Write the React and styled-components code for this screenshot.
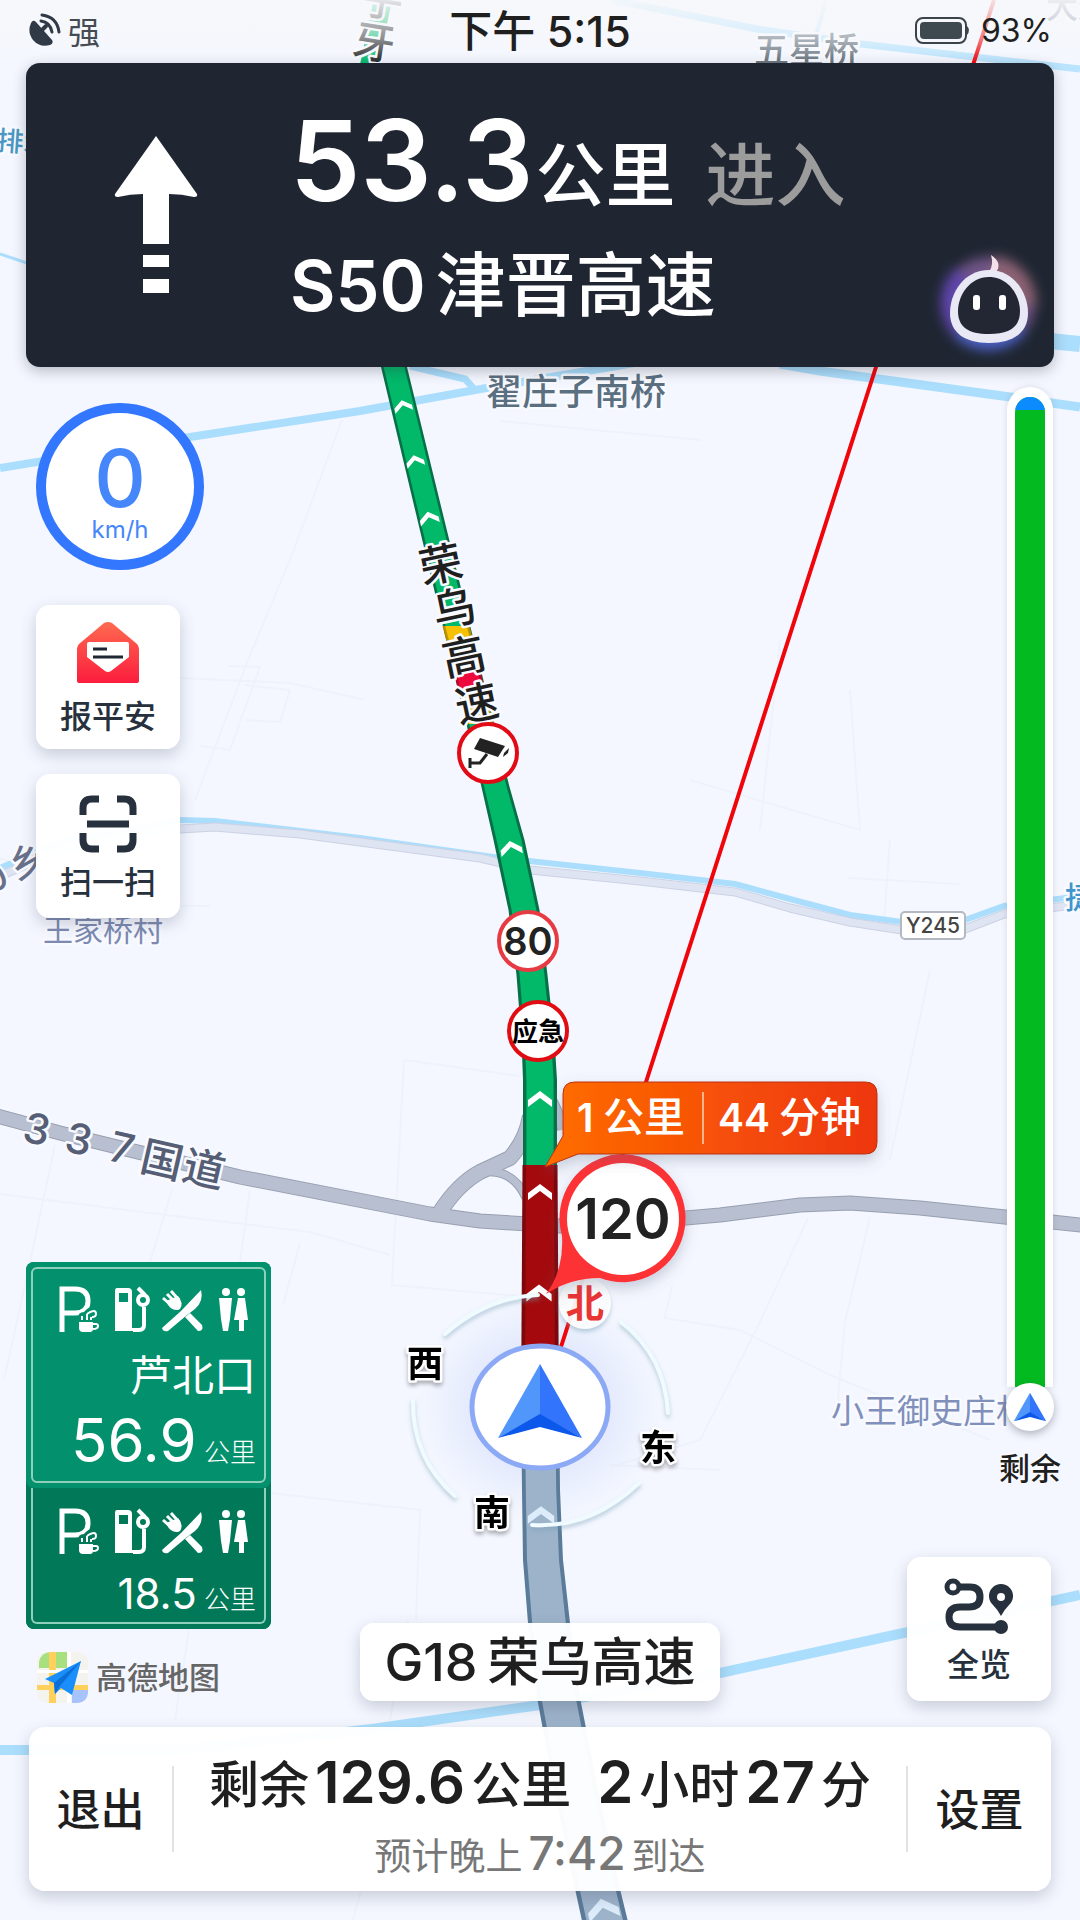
import React from "react";
import styled, { createGlobalStyle, css } from "styled-components";

const latin = `Inter, "Noto Sans CJK SC", sans-serif`;
const hans = `"Noto Sans CJK SC", sans-serif`;

const GlobalStyle = createGlobalStyle`
  * {
    box-sizing: border-box;
  }

  body {
    margin: 0;
    background: #f4f7ff;
    color: #1f1f1f;
    font-family: ${latin};
  }

  button {
    margin: 0;
    padding: 0;
    border: 0;
    color: inherit;
    font: inherit;
    cursor: pointer;
  }
`;

//  MAP DATA
// every route point is [x, y, width]
const greenRoute = [
  [387, 340, 25],
  [394, 367, 26],
  [436, 541, 27],
  [495, 785, 28],
  [509, 840, 31],
  [524, 910, 31],
  [532, 975, 31],
  [538, 1040, 33],
  [540, 1080, 34],
  [540, 1165, 34],
];
const yellowRoute = [
  [456, 626, 27],
  [464, 657, 27],
];
const redRoute = [
  [463, 655, 27],
  [472, 692, 27],
];
const slowRoute = [
  [472, 692, 27],
  [480, 724, 27],
];
const jamRoute = [
  [540, 1165, 35],
  [540, 1410, 38],
];
const passedRoute = [
  [540, 1400, 38],
  [541, 1490, 38],
  [543, 1560, 40],
  [549, 1623, 42],
  [559, 1700, 43],
  [576, 1790, 44],
  [598, 1891, 45],
  [607, 1930, 46],
];

const chevrons = [
  { x: 403, y: 406, s: 0.75, r: -13 },
  { x: 415, y: 461, s: 0.75, r: -13 },
  { x: 429, y: 518, s: 0.8, r: -13 },
  { x: 511, y: 848, s: 0.9, r: -10 },
  { x: 540, y: 1099, s: 1, r: 0 },
  { x: 540, y: 1192, s: 1, r: 0 },
  { x: 539, y: 1293, s: 1.05, r: 0 },
  { x: 541, y: 1515, s: 1.1, r: 0, fill: "#dcecfb" },
  { x: 603, y: 1909, s: 1.3, r: -12, fill: "#dcecfb" },
];

const faintRoads = [
  "M342 420 L290 560 L248 660 L195 800",
  "M180 678 L290 683 L365 700",
  "M228 666 L260 667 L230 750 L200 746",
  "M245 685 L290 690 L280 722 L245 720",
  "M404 1060 L520 1076",
  "M404 1060 L392 1285 L520 1296",
  "M0 1194 L150 1213 L310 1232 L390 1255",
  "M55 1145 L30 1262 L4 1380",
  "M172 1190 L150 1262",
  "M250 1190 L240 1262",
  "M300 1243 L283 1305",
  "M808 1218 L760 1322 L700 1440 L620 1464",
  "M870 1217 L845 1322 L836 1420",
  "M672 1285 L665 1318 L740 1330 L830 1375 L990 1440",
  "M890 840 L884 920",
  "M848 878 L960 884",
  "M930 970 L890 1160",
  "M780 640 L760 830",
  "M690 780 L860 830 L850 690",
  "M189 1630 L175 1720",
  "M408 1620 L390 1720",
  "M361 1891 L350 1930",
  "M270 1493 L420 1510 L416 1620",
  "M610 1465 L720 1470",
  "M500 421 L700 440",
  "M0 858 L110 905 L210 906",
];

const countryRoad =
  "M0 876 L60 850 L180 829 L215 827 L300 834 L480 858 L530 870 L640 881 L735 892 L790 908 L850 922 L902 930 L965 929 L1004 914 L1080 904";

const edges = (points) => {
  const left = points.map(([x, y, w]) => `${x - w / 2},${y}`);
  const right = points.map(([x, y, w]) => `${x + w / 2},${y}`).reverse();
  return [...left, ...right].join(" ");
};

function Route({ points, fill, edge }) {
  return (
    <g>
      <polygon points={edges(points)} fill={edge} />
      <polygon
        points={edges(points.map(([x, y, w]) => [x, y, w * 0.8]))}
        fill={fill}
      />
    </g>
  );
}

function Navigator() {
  return (
    <g>
      <path d="M0 -43 L-42 31 L0 8 Z" fill="#5196fb" />
      <path d="M0 -43 L42 31 L0 8 Z" fill="#3274fb" />
      <path d="M-42 31 L0 7 L42 31 L0 20 Z" fill="#0b58ea" />
    </g>
  );
}

function MapCanvas() {
  return (
    <Canvas viewBox="0 0 1080 1920" preserveAspectRatio="xMidYMin slice">
      <defs>
        <radialGradient id="puckGlow">
          <stop offset="0.5" stopColor="#8fa5f2" stopOpacity="0.18" />
          <stop offset="1" stopColor="#a9bbf6" stopOpacity="0" />
        </radialGradient>
        <linearGradient id="jamFill" x1="0" x2="1" y1="0" y2="0">
          <stop offset="0" stopColor="#ff6d00" />
          <stop offset="1" stopColor="#ee360e" />
        </linearGradient>
        <filter id="soft" x="-30%" y="-30%" width="160%" height="170%">
          <feDropShadow dx="0" dy="6" stdDeviation="7" floodColor="#5b6480" floodOpacity="0.3" />
        </filter>
        <filter id="thin" x="-30%" y="-30%" width="160%" height="160%">
          <feDropShadow dx="0" dy="3" stdDeviation="2" floodColor="#6f9db4" floodOpacity="0.5" />
        </filter>
      </defs>

      <g fill="none" stroke="#eef2fa" strokeWidth="2">
        {faintRoads.map((d) => (
          <path key={d} d={d} />
        ))}
      </g>

      {/* rivers */}
      <g fill="none" stroke="#abdefc">
        <path d="M613 0 L757 29 L861 44 L1080 69" strokeWidth="7" opacity="0.8" />
        <path d="M826 0 L816 36" strokeWidth="4" opacity="0.5" />
        <path d="M0 254 L30 264" strokeWidth="3" />
        <path d="M0 468 L190 437 L360 411 L475 390 L640 362" strokeWidth="8" />
        <path d="M410 366 L465 379 L475 390" strokeWidth="7" />
        <path d="M780 364 L820 371 L1010 397 L1080 407" strokeWidth="9" />
        <path d="M1040 340 L1080 344" strokeWidth="16" />
        <path d="M0 868 L60 842 L180 820 L215 821 L360 838 L500 858 L640 873 L735 884 L790 899 L850 915 L902 922 L965 920 L1004 906 L1080 896" strokeWidth="6" />
        <path d="M0 1750 L180 1750 L372 1729 L540 1705 L720 1673 L908 1632 L1080 1595" strokeWidth="10" />
      </g>
      <g fill="none" strokeLinejoin="round">
        <path d={countryRoad} stroke="#cbd2e4" strokeWidth="9" />
        <path d={countryRoad} stroke="#dfe4f3" strokeWidth="7" />
      </g>

      {/* national road with its ramp */}
      {[
        { color: "#98a0b0", grow: 2 },
        { color: "#b8bfd0", grow: 0 },
      ].map(({ color, grow }) => (
        <g key={color} fill="none" stroke={color} strokeLinejoin="round">
          <path d="M-10 1114 L60 1133 L240 1177 L430 1214 L480 1221 L560 1226 L640 1222 L720 1215 L800 1205 L850 1203 L920 1208 L1090 1226" strokeWidth={13 + grow} />
          <path d="M440 1212 Q458 1184 480 1172 L510 1158 Q526 1140 530 1116" strokeWidth={14 + grow} />
          <path d="M486 1172 Q514 1170 526 1198" strokeWidth={7 + grow} />
          <path d="M548 1094 Q560 1110 562 1130" strokeWidth={8 + grow} />
        </g>
      ))}

      <ellipse cx="540" cy="1407" rx="125" ry="116" fill="url(#puckGlow)" />
      <path d="M994 0 L973 65 L876 367 L724 840 L646 1082 L560 1350" fill="none" stroke="#f0060a" strokeWidth="4" />

      {/* route */}
      <path d="M368 70 L385 -10" stroke="#02b96a" strokeWidth="18" />
      <Route points={passedRoute} fill="#9db3ca" edge="#5a7b99" />
      <Route points={greenRoute} fill="#02b96a" edge="#067048" />
      <Route points={yellowRoute} fill="#f5c100" edge="#b89000" />
      <Route points={redRoute} fill="#ee0a3c" edge="#b3082f" />
      <Route points={slowRoute} fill="#f5c842" edge="#b89000" />
      <Route points={jamRoute} fill="#a40a0d" edge="#7b090c" />
      {chevrons.map(({ x, y, s, r, fill }) => (
        <path
          key={y}
          transform={`translate(${x} ${y}) rotate(${r}) scale(${s})`}
          d="M-12 1 L0 -8 L12 1 L12 8 L0 -1 L-12 8 Z"
          fill={fill || "#fff"}
        />
      ))}

      {/* place names */}
      <Halo fontSize="35" fill="#69747f" x="754" y="63">五星桥</Halo>
      <Halo fontSize="32" fill="#8a8fa8" x="1046" y="18">大道</Halo>
      <Halo fontSize="27" fill="#4a97c4" x="-4" y="150" transform="rotate(4 -4 150)">排水河</Halo>
      <Halo fontSize="36" fill="#5a6f80" x="486" y="405">翟庄子南桥</Halo>
      <Halo fontSize="30" fill="#7d89b0" x="43" y="941" $light>王家桥村</Halo>
      <Halo fontSize="33" fill="#8090bb" x="831" y="1423" $light>小王御史庄村</Halo>
      <Halo fontSize="30" fill="#3f95cc" x="1065" y="908">捷地</Halo>
      <g textAnchor="middle">
        <Halo fontSize="36" fill="#69718a" transform="translate(-5 878) rotate(-28)" y="13">0</Halo>
        <Halo fontSize="36" fill="#69718a" transform="translate(27 861) rotate(-25)" y="13">乡</Halo>
        {[
          ["3", 37, 1129],
          ["3", 79, 1139],
          ["7", 122, 1148],
          ["国", 162, 1160],
          ["道", 204, 1169],
        ].map(([char, x, y]) => (
          <Halo key={x} fontSize="42" fill="#555e75" transform={`translate(${x} ${y}) rotate(13)`} y="15">
            {char}
          </Halo>
        ))}
        {[
          ["荣", 441, 565],
          ["乌", 454, 609],
          ["高", 464, 657],
          ["速", 477, 704],
        ].map(([char, x, y]) => (
          <Halo key={y} fontSize="43" fill="#1f1f1f" transform={`translate(${x} ${y}) rotate(-12)`} y="15">
            {char}
          </Halo>
        ))}
        <Halo fontSize="42" fill="#26292c" transform="translate(382 1) rotate(9)" y="15">子</Halo>
        <Halo fontSize="42" fill="#26292c" transform="translate(374 43) rotate(9)" y="15">牙</Halo>
      </g>
      <rect x="901" y="912" width="64" height="27" rx="4" fill="#fff" stroke="#b4b8c0" strokeWidth="2" />
      <text x="933" y="933" fontSize="21" fontWeight="500" fill="#444" textAnchor="middle">Y245</text>

      {/* road signs */}
      <circle cx="488" cy="753" r="29" fill="#fff" stroke="#e20b15" strokeWidth="4" />
      <g transform="translate(488 753)" fill="#222">
        <path d="M-8 -15 L17 -7 L10 4 L-14 -4 Z" />
        <path d="M16 0 L21 -5 L20 0 L15 4 Z" />
        <path d="M-18 5 V15 M-18 10 H-8 L-1 1" fill="none" stroke="#222" strokeWidth="3" />
      </g>
      <circle cx="528" cy="941" r="29" fill="#fff" stroke="#e73a43" strokeWidth="4" />
      <text x="528" y="955" fontSize="38" fontWeight="600" fill="#222" textAnchor="middle">80</text>
      <circle cx="538" cy="1031" r="29" fill="#fff" stroke="#e00d13" strokeWidth="4" />
      <text x="538" y="1041" fontSize="26" fontWeight="700" fill="#000" textAnchor="middle">应急</text>

      {/* compass */}
      <g fill="none" stroke="#f0fbff" strokeWidth="4" strokeLinecap="round" filter="url(#thin)">
        <path d="M445 1334 Q487 1297 538 1295" />
        <path d="M621 1322 Q665 1356 668 1413" />
        <path d="M639 1483 Q590 1529 532 1525" />
        <path d="M413 1400 Q412 1458 455 1496" />
      </g>
      <circle cx="585" cy="1303" r="26" fill="#fff" fillOpacity="0.9" filter="url(#thin)" />
      <g textAnchor="middle" fontWeight="700">
        <text x="585" y="1317" fontSize="38" fill="#e93434">北</text>
        <Point x="425" y="1377" fontSize="36">西</Point>
        <Point x="658" y="1461" fontSize="36">东</Point>
        <Point x="492" y="1526" fontSize="36">南</Point>
      </g>
      <ellipse cx="540" cy="1407" rx="68" ry="61" fill="#fff" stroke="#8ca9f5" strokeWidth="5" />
      <g transform="translate(540 1407)">
        <Navigator />
      </g>

      {/* speed limit pin */}
      <g filter="url(#soft)">
        <path d="M546 1294 Q564 1270 562 1236 A63 64 0 1 1 600 1278 Q570 1278 546 1294 Z" fill="#fd3034" />
        <circle cx="623" cy="1219" r="56" fill="#fff" />
      </g>
      <text x="623" y="1239" fontSize="56" fontWeight="600" fill="#222" textAnchor="middle">120</text>

      {/* traffic jam callout */}
      <g filter="url(#soft)">
        <path
          d="M575 1082 H865 Q877 1082 877 1094 V1142 Q877 1154 865 1154 H578 L545 1167 L563 1136 V1094 Q563 1082 575 1082 Z"
          fill="url(#jamFill)"
          stroke="#b8330a"
          strokeWidth="1"
        />
      </g>
      <g fill="#fff" fontSize="39" fontWeight="600">
        <text x="577" y="1132">1</text>
        <text x="603" y="1132" fontSize="41" fontWeight="500">公里</text>
        <rect x="702" y="1092" width="2" height="52" fill="#ffb48c" />
        <text x="718" y="1132">44</text>
        <text x="779" y="1132" fontSize="41" fontWeight="500">分钟</text>
      </g>
    </Canvas>
  );
}

//  ICONS
function SatelliteIcon() {
  return (
    <svg width="34" height="34" viewBox="0 0 34 34">
      <path d="M3 10 Q5 6 8 9 L24 27 Q26 30 22 32 Q12 35 5 27 Q-1 19 3 10 Z" fill="#303a46" />
      <path d="M14 17 L18 13" stroke="#303a46" strokeWidth="4" strokeLinecap="round" />
      <path d="M13 8 Q22 9 24 19 M14 2 Q29 4 31 19" fill="none" stroke="#303a46" strokeWidth="3" strokeLinecap="round" />
    </svg>
  );
}

function BatteryIcon() {
  return (
    <svg width="56" height="28" viewBox="0 0 56 28">
      <rect x="1" y="1" width="50" height="25" rx="7" fill="none" stroke="#3b4249" strokeWidth="2" />
      <rect x="5" y="5" width="42" height="17" rx="4" fill="#3f4950" />
      <path d="M52 9 Q56 13 52 18 Z" fill="#3b4249" />
    </svg>
  );
}

function StraightArrow() {
  return (
    <svg width="84" height="158" viewBox="0 0 84 158" fill="#fff">
      <path d="M42 0 L83 58 Q84 61 80 61 Q68 58 55 58 V108 H29 V58 Q16 58 4 61 Q0 61 1 58 Z" />
      <rect x="29" y="119" width="26" height="12" />
      <rect x="29" y="143" width="26" height="14" />
    </svg>
  );
}

function AssistantFace() {
  return (
    <svg width="120" height="120" viewBox="-5 -5 120 120">
      <defs>
        <filter id="haze" x="-30%" y="-30%" width="160%" height="160%">
          <feGaussianBlur stdDeviation="6" />
        </filter>
      </defs>
      <g filter="url(#haze)">
        <circle cx="55" cy="55" r="46" fill="#6f5586" />
        <path d="M55 55 L22 20 A48 48 0 0 0 20 88 Z" fill="#5f44ab" />
        <path d="M55 55 L20 88 A48 48 0 0 0 92 84 Z" fill="#4d62c6" />
        <path d="M55 55 L60 8 A47 47 0 0 1 102 58 Z" fill="#8c6273" />
      </g>
      <path d="M57 7 Q69 15 62 24 H55 Q60 17 57 7 Z" fill="#f3e0ea" />
      <path d="M55 22 C80 22 94 45 94 65 C94 84 80 95 55 95 C30 95 16 84 16 65 C16 45 30 22 55 22 Z" fill="#e9e8f5" />
      <path d="M55 29 C74 29 86 47 86 63 C86 79 76 86 55 86 C34 86 24 79 24 63 C24 47 36 29 55 29 Z" fill="#222733" />
      <rect x="39" y="47" width="7" height="15" rx="3" fill="#fff" />
      <rect x="65" y="47" width="7" height="15" rx="3" fill="#fff" />
    </svg>
  );
}

function LetterIcon() {
  return (
    <svg width="74" height="66" viewBox="0 0 74 66">
      <defs>
        <linearGradient id="letter" x1="0" x2="0" y1="0" y2="1">
          <stop offset="0" stopColor="#ff6a50" />
          <stop offset="1" stopColor="#fb1d3d" />
        </linearGradient>
      </defs>
      <path d="M33 1 Q37 -1 41 1 L66 22 Q68 24 68 27 V59 Q68 61 65 61 H9 Q6 61 6 59 V27 Q6 24 8 22 Z" fill="url(#letter)" />
      <path d="M18 20 H56 Q58 20 58 22 V35 L40 49 Q37 51 34 49 L16 35 V22 Q16 20 18 20 Z" fill="#fff" />
      <path d="M22 27 H36 M22 35 H52" stroke="#1e2733" strokeWidth="3" />
    </svg>
  );
}

function ScanIcon() {
  return (
    <svg width="60" height="60" viewBox="0 0 60 60" fill="none" stroke="#27313d" strokeWidth="7">
      <path d="M5 21 V14 Q5 5 14 5 H21 M39 5 H46 Q55 5 55 14 V21 M55 39 V46 Q55 55 46 55 H39 M21 55 H14 Q5 55 5 46 V39" />
      <path d="M9 30 H51" />
    </svg>
  );
}

function OverviewIcon() {
  return (
    <svg width="70" height="56" viewBox="0 0 70 56">
      <path d="M8 9 H26 Q36 9 36 19 Q36 29 25 29 H16 Q5 29 5 39 Q5 49 16 49 H56" fill="none" stroke="#27313d" strokeWidth="7" />
      <circle cx="9" cy="9" r="6" fill="#fff" stroke="#27313d" strokeWidth="5" />
      <circle cx="57" cy="49" r="7" fill="#27313d" />
      <path d="M57 38 Q54 32 49 27 A12 12 0 1 1 65 27 Q60 32 57 38 Z" fill="#27313d" />
      <circle cx="57" cy="19" r="4" fill="#fff" />
    </svg>
  );
}

// gap is the panel colour, it parts the steam from the P
function ServiceIcons({ gap }) {
  return (
    <Services viewBox="0 0 192 46" fill="#fff">
      {/* parking and coffee */}
      <path d="M3 46 V3 H16 Q29 3 29 15 Q29 27 16 27 H3" fill="none" stroke="#fff" strokeWidth="5" />
      <path d="M19 46 V32 Q19 26 25 26 Q30 20 36 21 L42 24 V46 Z" fill={gap} />
      <path d="M20 36 H34 V43 Q34 46 31 46 H24 Q20 46 20 42 Z" />
      <path d="M34 38 H37 Q39 38 39 40 Q39 43 34 43 M23 34 V30 M28 34 V28 M32 34 V31 M28 28 Q37 22 37 28 Q37 31 33 31" fill="none" stroke="#fff" strokeWidth="2" />
      {/* fuel */}
      <path fillRule="evenodd" d="M58 2 H69 Q73 2 73 6 V42 H76 V45 H56 V5 Q56 2 58 2 Z M60 7 V16 H69 V7 Z" />
      <path d="M74 44 H80 Q85 44 85 39 V21 M79 2 L86 9" fill="none" stroke="#fff" strokeWidth="4" />
      <circle cx="84" cy="14" r="5" fill="none" stroke="#fff" strokeWidth="4" />
      {/* restaurant */}
      <path d="M142 4 Q145 15 136 23 L128 29 L109 45 Q104 46 103 42 L122 25 Z" />
      <path d="M126 31 L131 27 L143 39 Q145 45 139 45 Z" />
      <path d="M104 12 L113 20 M108 8 L117 17 M112 5 L120 14" stroke="#fff" strokeWidth="3" />
      <path d="M107 15 L119 10 Q125 17 121 23 L119 24 Q111 25 107 15 Z" />
      {/* toilets */}
      <circle cx="167" cy="6" r="4" />
      <circle cx="182" cy="6" r="4" />
      <path d="M160 12 H173 L171 33 L169 45 H164 L162 33 Z" />
      <path d="M179 12 H186 L189 34 H185 V45 H180 V34 H175 Z" />
    </Services>
  );
}

function AmapLogo() {
  return (
    <svg width="51" height="51" viewBox="0 0 51 51">
      <rect width="51" height="51" rx="10" fill="#f5f3ee" />
      <path d="M31 0 V16 H2 V10 Q4 0 14 0 Z" fill="#a9e07f" />
      <path d="M12 0 H19 V51 H12 Z M0 33 H51 V38 H0 Z" fill="#ffd05c" />
      <path d="M0 18 H51 V21 H0 Z M30 0 H34 V51 H30 Z" fill="#fff" />
      <path d="M35 38 H51 V41 Q50 50 41 51 H35 Z" fill="#a7c3fb" />
      <path d="M44 9 L8 27 L17 31 L18 42 L24 36 L35 43 Z" fill="#1a8ffc" />
      <path d="M44 9 L17 31 L18 42 L23 34 Z" fill="#0b6fd6" />
    </svg>
  );
}

//  PAGE
function App() {
  return (
    <>
      <GlobalStyle />
      <Screen>
        <MapCanvas />
        <StatusBar>
          <Signal>
            <SatelliteIcon />
            强
          </Signal>
          <Clock>下午 5:15</Clock>
          <Battery>
            <BatteryIcon />
            93%
          </Battery>
        </StatusBar>

        <Banner>
          <StraightArrow />
          <Guide>
            <GuideLine>
              <Distance>53.3</Distance>公里<Action>进入</Action>
            </GuideLine>
            <GuideRoad>
              S50<span>津晋高速</span>
            </GuideRoad>
          </Guide>
          <Assistant type="button" aria-label="语音助手">
            <AssistantFace />
          </Assistant>
        </Banner>

        <Body>
          <LeftColumn>
            <Speed>
              <strong>0</strong>
              <small>km/h</small>
            </Speed>
            <ToolButton type="button">
              <LetterIcon />
              报平安
            </ToolButton>
            <ToolButton type="button">
              <ScanIcon />
              扫一扫
            </ToolButton>
            <ServiceSign>
              <SignPanel>
                <ServiceIcons gap="#02906d" />
                <SignName>芦北口</SignName>
                <SignDistance $large>
                  <b>56.9</b> 公里
                </SignDistance>
              </SignPanel>
              <SignPanel $dark>
                <ServiceIcons gap="#017858" />
                <SignDistance>
                  <b>18.5</b> 公里
                </SignDistance>
              </SignPanel>
            </ServiceSign>
            <Brand>
              <AmapLogo />
              高德地图
            </Brand>
          </LeftColumn>

          <RoadName>
            G18<span>荣乌高速</span>
          </RoadName>

          <RightColumn>
            <Track>
              <TrackFill>
                <TrackRest />
              </TrackFill>
            </Track>
            <TrackKnob>
              <svg width="34" height="34" viewBox="-44 -44 88 76">
                <Navigator />
              </svg>
            </TrackKnob>
            <TrackLabel>剩余</TrackLabel>
            <ToolButton type="button">
              <OverviewIcon />
              全览
            </ToolButton>
          </RightColumn>
        </Body>

        <TripBar>
          <TripButton type="button">退出</TripButton>
          <Trip>
            <TripMain>
              剩余<b>129.6</b>公里<b className="hour">2</b>小时<b>27</b>分
            </TripMain>
            <TripEta>
              预计晚上<b>7:42</b>到达
            </TripEta>
          </Trip>
          <TripButton type="button">设置</TripButton>
        </TripBar>
      </Screen>
    </>
  );
}

const Screen = styled.main`
  position: relative;
  display: flex;
  flex-direction: column;
  min-height: 100vh;
  padding-bottom: 29px;
  overflow: hidden;
`;

const Canvas = styled.svg`
  position: absolute;
  inset: 0;
  z-index: 0;
  width: 100%;
  height: 100%;
  font-family: ${latin};
`;

const Halo = styled.text`
  font-weight: ${(props) => (props.$light ? 400 : 500)};
  paint-order: stroke;
  stroke: #f8faff;
  stroke-width: 5px;
  stroke-linejoin: round;
`;

const Point = styled.text`
  fill: #000;
  paint-order: stroke;
  stroke: #fff;
  stroke-width: 5px;
  stroke-linejoin: round;
  filter: drop-shadow(0 3px 2px rgba(0, 0, 0, 0.3));
`;

const StatusBar = styled.header`
  z-index: 1;
  display: grid;
  grid-template-columns: 1fr auto 1fr;
  align-items: center;
  height: 63px;
  padding: 0 28px 2px;
  background: linear-gradient(rgba(247, 248, 250, 0.9), rgba(247, 248, 250, 0.5) 60%, rgba(247, 248, 250, 0));
`;

const Signal = styled.div`
  display: flex;
  align-items: center;
  gap: 6px;
  padding-bottom: 2px;
  color: #454b52;
  font-family: ${hans};
  font-size: 32px;
  line-height: 56px;
`;

const Clock = styled.time`
  font-size: 43px;
  font-weight: 500;
  line-height: 60px;
`;

const Battery = styled.div`
  display: flex;
  align-items: center;
  justify-content: flex-end;
  gap: 10px;
  font-size: 32px;
`;

const card = css`
  background: rgba(255, 255, 255, 0.97);
  box-shadow: 0 6px 16px rgba(60, 65, 90, 0.24);
`;

const Banner = styled.section`
  z-index: 1;
  position: relative;
  display: flex;
  align-items: center;
  gap: 92px;
  height: 304px;
  margin: 0 26px;
  padding: 0 88px;
  border-radius: 14px;
  background: #1f2632;
  box-shadow: 0 4px 14px rgba(40, 45, 60, 0.3);
  color: #fff;
`;

const Guide = styled.div`
  display: flex;
  flex-direction: column;
  padding-top: 6px;
  white-space: nowrap;
`;

const GuideLine = styled.div`
  display: flex;
  align-items: baseline;
  font-size: 70px;
  font-weight: 500;
  line-height: 120px;
`;

const Distance = styled.strong`
  margin-right: 2px;
  font-size: 112px;
  font-weight: 600;
`;

const Action = styled.span`
  margin-left: 30px;
  color: #9c9c9c;
`;

const GuideRoad = styled.div`
  font-size: 70px;
  font-weight: 600;
  line-height: 100px;

  span {
    margin-left: 10px;
    font-weight: 500;
  }
`;

const Assistant = styled.button`
  position: absolute;
  right: 5px;
  bottom: 4px;
  display: flex;
  background: none;
`;

const Body = styled.section`
  z-index: 1;
  flex: 1;
  display: grid;
  grid-template-columns: 1fr auto 1fr;
  align-items: end;
  padding: 0 26px;
`;

const LeftColumn = styled.div`
  display: flex;
  flex-direction: column;
  align-items: flex-start;
  align-self: stretch;
  padding-top: 36px;
  color: #27313d;
`;

const Speed = styled.div`
  display: flex;
  flex-direction: column;
  align-items: center;
  width: 168px;
  height: 167px;
  margin: 0 0 35px 10px;
  padding-top: 25px;
  border: 10px solid #3377ff;
  border-radius: 50%;
  background: #fff;
  color: #4586fb;

  strong {
    font-size: 80px;
    font-weight: 500;
    line-height: 80px;
  }

  small {
    font-size: 24px;
    line-height: 24px;
  }
`;

const ToolButton = styled.button`
  ${card}
  display: flex;
  flex-direction: column;
  align-items: center;
  justify-content: center;
  gap: 10px;
  width: 144px;
  height: 144px;
  border-radius: 14px;
  color: #27313d;
  font-family: ${hans};
  font-size: 32px;
  font-weight: 500;
  line-height: 36px;

  ${LeftColumn} & {
    margin: 0 0 25px 10px;
    gap: 8px;
  }
`;

const ServiceSign = styled.section`
  width: 245px;
  margin-top: auto;
  overflow: hidden;
  border-radius: 8px;
  background: #017858;
`;

const SignPanel = styled.div`
  position: relative;
  height: ${(props) => (props.$dark ? "141px" : "226px")};
  padding: ${(props) => (props.$dark ? "20px" : "24px")} 15px 0;
  border-radius: ${(props) => (props.$dark ? "0" : "0 0 8px 8px")};
  background: ${(props) => (props.$dark ? "#017858" : "#02906d")};
  color: #fff;
  text-align: right;

  &::after {
    content: "";
    position: absolute;
    inset: ${(props) => (props.$dark ? "0 5px 5px" : "5px")};
    border: 2px solid #8fd0bd;
    border-top-width: ${(props) => (props.$dark ? "0" : "2px")};
    border-radius: ${(props) => (props.$dark ? "0 0 6px 6px" : "6px")};
  }
`;

const Services = styled.svg`
  display: block;
  width: 192px;
  height: 46px;
  margin-left: 18px;
`;

const SignName = styled.div`
  margin-top: 16px;
  font-size: 42px;
  line-height: 56px;
`;

const SignDistance = styled.div`
  font-size: 26px;
  font-weight: 300;
  line-height: ${(props) => (props.$large ? "72px" : "80px")};

  b {
    font-size: ${(props) => (props.$large ? "60px" : "42px")};
    font-weight: 400;
  }
`;

const Brand = styled.div`
  display: flex;
  align-items: center;
  gap: 8px;
  height: 73px;
  padding: 24px 0 0 11px;
  color: #666;
  font-size: 31px;
  font-weight: 500;
  line-height: 51px;
`;

const RoadName = styled.h1`
  ${card}
  margin: 0 0 1px;
  padding: 2px 24px 0;
  border-radius: 14px;
  font-size: 52px;
  font-weight: 500;
  line-height: 76px;
  white-space: nowrap;

  span {
    margin-left: 10px;
  }
`;

const RightColumn = styled.div`
  display: flex;
  flex-direction: column;
  align-items: flex-end;
  align-self: stretch;
  padding: 20px 3px 1px 0;

  ${ToolButton} {
    margin-top: 70px;
  }
`;

const Track = styled.div`
  flex: 1;
  display: flex;
  width: 46px;
  margin-right: -2px;
  padding: 10px 8px 0;
  border-radius: 23px 23px 0 0;
  background: #fff;
  box-shadow: 0 0 6px rgba(60, 65, 90, 0.16);
`;

const TrackFill = styled.div`
  flex: 1;
  overflow: hidden;
  border-radius: 15px 15px 0 0;
  background: #03ba20;
`;

const TrackRest = styled.div`
  height: 13px;
  background: #0a8cff;
`;

const TrackKnob = styled.div`
  display: flex;
  align-items: center;
  justify-content: center;
  width: 48px;
  height: 48px;
  margin: -4px -3px 0 0;
  border-radius: 50%;
  background: #fff;
  box-shadow: 0 3px 8px rgba(40, 45, 60, 0.35);
`;

const TrackLabel = styled.div`
  margin: 20px -10px 0 0;
  font-size: 31px;
  font-weight: 500;
  line-height: 36px;
  text-shadow: 0 0 3px #fff, 0 0 3px #fff;
`;

const TripBar = styled.footer`
  ${card}
  z-index: 1;
  display: flex;
  align-items: center;
  height: 164px;
  margin: 25px 29px 0;
  border-radius: 16px;
`;

const TripButton = styled.button`
  width: 145px;
  height: 86px;
  padding-bottom: 4px;
  border-right: 2px solid #e2e2e4;
  background: none;
  font-family: ${hans};
  font-size: 44px;
  font-weight: 500;

  &:last-child {
    border-right: 0;
    border-left: 2px solid #e2e2e4;
  }
`;

const Trip = styled.div`
  flex: 1;
  padding-top: 12px;
  text-align: center;
  white-space: nowrap;
`;

const TripMain = styled.div`
  font-size: 50px;
  font-weight: 500;
  line-height: 76px;

  b {
    margin: 0 6px;
    font-size: 58px;
    font-weight: 600;
  }

  .hour {
    margin-left: 26px;
  }
`;

const TripEta = styled.div`
  color: #777;
  font-size: 37px;
  line-height: 60px;

  b {
    margin: 0 6px;
    font-size: 46px;
    font-weight: 500;
  }
`;

export default App;
